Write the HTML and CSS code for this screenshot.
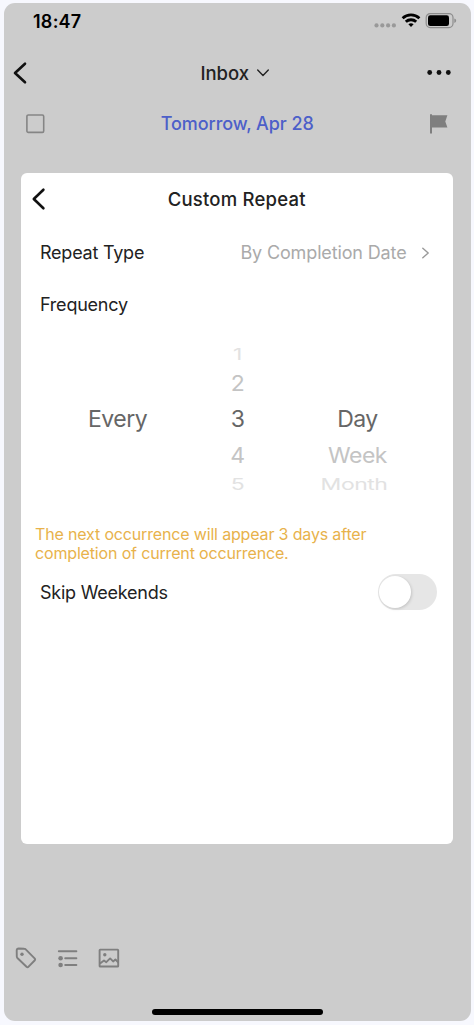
FILE: index.html
```html
<!DOCTYPE html>
<html lang="en">
<head>
<meta charset="utf-8">
<title>Custom Repeat</title>
<link rel="stylesheet" href="styles.css">
</head>
<body>
<main class="screen">
  <header class="status">
    <span class="time">18:47</span>
    <svg class="status-icons" width="84" height="20" viewBox="0 0 84 20">
      <g fill="#999"><circle cx="3.5" cy="14.4" r="2.1"/><circle cx="9.3" cy="14.4" r="2.1"/><circle cx="15.1" cy="14.4" r="2.1"/><circle cx="20.9" cy="14.4" r="2.1"/></g>
      <g fill="none" stroke="#000" stroke-width="2.8"><path d="M29.6 7.2a12.4 12.4 0 0 1 16.8 0"/><path d="M32.8 10.8a7.6 7.6 0 0 1 10.4 0"/></g>
      <path d="M35.4 13.3a4 4 0 0 1 5.2 0L38 16z"/>
      <rect x="53.2" y="2.6" width="26.8" height="14" rx="4" fill="none" stroke="#8d8d8d" stroke-width="1.2"/>
      <rect x="55" y="4.3" width="21" height="10.7" rx="2.3"/>
      <path d="M81.3 7.5v4.4q1.9-.6 1.9-2.2t-1.9-2.2z" fill="#8d8d8d"/>
    </svg>
  </header>
  <nav class="nav">
    <svg width="16" height="24" viewBox="0 0 16 24"><path class="back" d="M13 2.7 3 12l10 9.3"/></svg>
    <div class="nav-title"><span>Inbox</span><svg width="14" height="10" viewBox="0 0 14 10"><path d="M1.7 2 7 7.4 12.3 2" fill="none" stroke="#222" stroke-width="1.4" stroke-linecap="round" stroke-linejoin="round"/></svg></div>
    <svg width="26" height="8" viewBox="0 0 26 8" fill="#111"><circle cx="3.7" cy="3.5" r="2.4"/><circle cx="13" cy="3.5" r="2.4"/><circle cx="22.3" cy="3.5" r="2.4"/></svg>
  </nav>
  <div class="date-row">
    <svg width="19" height="20" viewBox="0 0 19 20"><rect x=".9" y="1" width="16.8" height="17.4" rx="1.4" fill="none" stroke="#858585" stroke-width="1.6"/></svg>
    <span class="date">Tomorrow, Apr 28</span>
    <svg width="18" height="20" viewBox="0 0 18 20" fill="#7f7f7f"><path d="M0 .3H2v1h15.4l-2.1 6.1 2.1 6.1H2v6H0z"/></svg>
  </div>
  <section class="dialog">
    <header class="dialog-head">
      <svg width="16" height="24" viewBox="0 0 16 24"><path class="back" d="M13.4 2.7 3.8 12l9.6 9.3"/></svg>
      <h1>Custom Repeat</h1>
    </header>
    <div class="row type-row">
      <span class="type-label">Repeat Type</span>
      <span class="value">By Completion Date</span>
      <svg width="8" height="12" viewBox="0 0 8 12"><path d="M.8 1.2 6.2 6 .8 10.8" fill="none" stroke="#999" stroke-width="1.4" stroke-linecap="round" stroke-linejoin="round"/></svg>
    </div>
    <div class="row frequency">Frequency</div>
    <div class="picker">
      <div class="column"><span class="item current every">Every</span></div>
      <div class="column">
        <span class="item far">1</span>
        <span class="item near">2</span>
        <span class="item current">3</span>
        <span class="item near lower">4</span>
        <span class="item far">5</span>
      </div>
      <div class="column units">
        <span class="item current">Day</span>
        <span class="item near lower">Week</span>
        <span class="item far month">Month</span>
      </div>
    </div>
    <p class="hint"><span>The next occurrence will appear 3 days after</span><br><span>completion of current occurrence.</span></p>
    <div class="row skip-row"><span>Skip Weekends</span><span class="switch"><span class="knob"></span></span></div>
  </section>
  <footer class="tools">
    <svg width="22" height="22" viewBox="0 0 22 22" class="tool"><path d="M1.7 3.6q0-2.1 2-2.1l5.6.2q.8 0 1.4.6l8.9 9.1q1 1.1 0 2.1l-6 6.2q-1 1-2.1 0L2.4 11q-.6-.6-.6-1.4z"/><circle cx="7" cy="7.3" r="1.7" class="solid"/></svg>
    <svg width="22" height="22" viewBox="0 0 22 22" class="tool"><path d="M1.8 4.3h17.6M8.2 11.2h11.2M8.2 18h11.2" stroke-linecap="round"/><circle cx="3.6" cy="11.2" r="2.3" class="solid"/><circle cx="3.6" cy="18" r="2.3" class="solid"/></svg>
    <svg width="22" height="22" viewBox="0 0 22 22" class="tool"><rect x="1.6" y="2.6" width="18.6" height="16.9" rx=".6"/><path d="m2 16.5 4-3 2.3 1.7 3.8-3.8 3 3 2.3-1.9 3 3" stroke-linejoin="round"/><circle cx="6.8" cy="7.8" r="1.7" class="solid"/></svg>
  </footer>
  <div class="home"></div>
</main>
</body>
</html>
```

FILE: styles.css
```css
* { box-sizing: border-box; }
body {
  margin: 0;
  padding: 3px 3.5px 4px;
  height: 1025px;
  background: #f7f8fe;
  font-family: Inter, "Liberation Sans", sans-serif;
  font-size: 18px;
  color: #222;
  overflow: hidden;
}
svg { display: block; flex: none; }
span { white-space: nowrap; }
.screen {
  display: flex;
  flex-direction: column;
  height: 1018px;
  background: #ccc;
  border-radius: 11px;
}
.status {
  display: flex;
  justify-content: space-between;
  align-items: center;
  height: 36px;
  padding: 0 14px 0 29.5px;
}
.time { font-size: 18px; font-weight: 600; letter-spacing: .25px; color: #000; }
.back { fill: none; stroke: #111; stroke-width: 2.6; stroke-linecap: round; stroke-linejoin: round; }
.nav {
  display: grid;
  grid-template-columns: 100px 1fr 100px;
  align-items: center;
  height: 68px;
  padding: 0 19px 0 8.5px;
}
.nav > :last-child { justify-self: end; }
.nav-title {
  display: flex;
  align-items: center;
  justify-content: center;
  gap: 7px;
  padding: 0 0 1px 7px;
  font-size: 18.5px;
  font-weight: 500;
}
.date-row {
  display: flex;
  align-items: center;
  justify-content: space-between;
  height: 34px;
  padding: 0 22.5px 0 22px;
}
.date { padding-bottom: 2px; font-size: 18px; font-weight: 500; letter-spacing: -.08px; color: #4c5fc9; }
.dialog {
  height: 671px;
  margin: 32px 18px 0 17.5px;
  background: #fff;
  border-radius: 6px;
}
.dialog-head {
  display: grid;
  grid-template-columns: 50px 1fr 50px;
  align-items: center;
  height: 52px;
  padding: 0 9px;
}
.dialog-head h1 { margin: 0; text-align: center; font-size: 18.5px; font-weight: 500; letter-spacing: .22px; }
.row { display: flex; align-items: center; padding-left: 19px; font-size: 18px; letter-spacing: -.23px; }
.type-row { height: 56px; padding-right: 23px; gap: 15px; }
.type-row span { padding-bottom: 2px; }
.value { margin-left: auto; letter-spacing: -.14px; color: #aaa; }
.frequency { height: 48px; padding-bottom: 2px; }
.picker {
  display: grid;
  grid-template-columns: repeat(3, 120px);
  height: 180px;
  padding: 13px 0 0 36.5px;
  font-size: 23px;
  letter-spacing: -.5px;
}
.column { display: flex; flex-direction: column; align-items: center; }
.column:first-child, .units { padding-top: 58px; }
.item { display: flex; align-items: center; }
.current { height: 38px; color: #666; }
.near { height: 34px; color: #c4c4c4; transform: scaleY(.94); }
.near.lower { padding-top: 2px; }
.far { height: 24px; padding-top: 2px; color: #e2e2e2; transform: scaleY(.68); }
.month { margin-right: 7px; }
.hint { margin: 0; padding: 16px 0 0 14px; font-size: 16px; line-height: 19px; letter-spacing: -.16px; color: #e8b24b; }
.skip-row { justify-content: space-between; height: 58px; padding-right: 16px; }
.switch { width: 59px; height: 36px; padding: 2px 1.5px; border-radius: 18px; background: #e6e6e6; }
.knob { display: block; width: 32px; height: 32px; border-radius: 50%; background: #fff; box-shadow: 1px 1px 3px rgba(0, 0, 0, .15); }
.tools { display: flex; gap: 19.5px; margin-top: 103px; padding-left: 11.5px; }
.tool { fill: none; stroke: #7f7f7f; stroke-width: 1.9; }
.solid { fill: #7f7f7f; stroke: none; }
.home { width: 171px; height: 6px; margin: auto auto 6px; background: #000; border-radius: 3px; }
```
